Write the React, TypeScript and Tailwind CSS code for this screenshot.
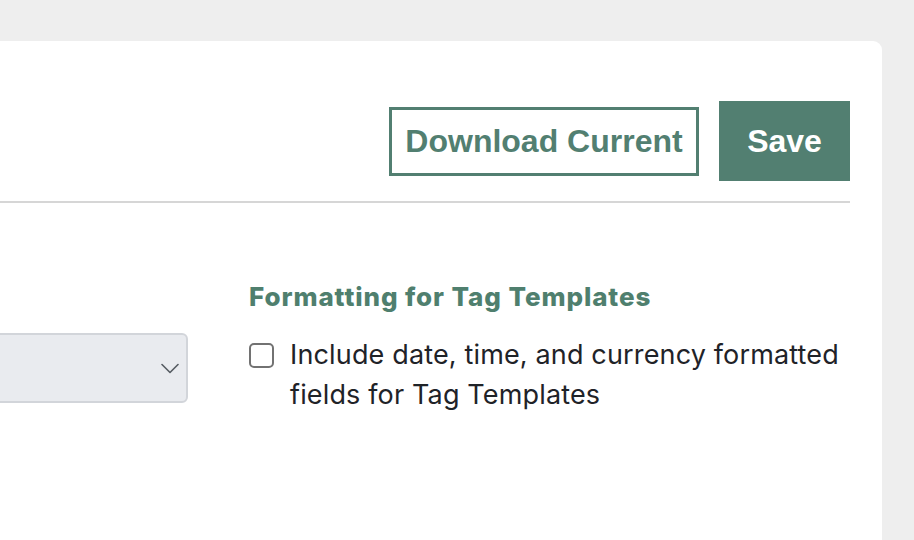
import React from "react";

export default function App() {
  return (
    <div className="min-h-[540px] w-full overflow-hidden bg-[#eeeeee] pt-[41px] pr-[32px]">
      <div className="h-[520px] w-full rounded-tr-[9px] bg-white pt-[60px] pr-[32px]">
        <div className="flex items-center justify-end gap-[20px]">
          <button
            className="h-[69px] w-[310px] border-[3px] border-[#527f71] bg-white text-[32px] font-bold leading-none text-[#527f71]"
            style={{ fontFamily: '"Liberation Sans", Arial, sans-serif' }}
          >
            Download Current
          </button>
          <button
            className="h-[80px] w-[131px] bg-[#527f71] text-[32px] font-bold leading-none text-white"
            style={{ fontFamily: '"Liberation Sans", Arial, sans-serif' }}
          >
            Save
          </button>
        </div>
        <div className="mt-[20px] h-[2px] w-full bg-[#d6d6d6]" />
        <div
          className="flex items-start gap-[61px]"
          style={{ fontFamily: 'Inter, "Noto Sans", sans-serif' }}
        >
          <div className="w-[188px] shrink-0 pt-[130px]">
            <div className="-ml-[12px] flex h-[70px] w-[200px] items-center justify-end rounded-[6px] border-2 border-[#d2d5da] bg-[#e9ebef] pr-[7px]">
              <svg width="18" height="11" viewBox="0 0 18 11" fill="none">
                <path d="M1 1.5 L9 9.5 L17 1.5" stroke="#555b62" strokeWidth="1.6" strokeLinecap="round" strokeLinejoin="round" />
              </svg>
            </div>
          </div>
          <div className="flex-1 pt-[78px]">
            <h2 className="text-[26px] font-extrabold leading-[32px] tracking-[0.9px] text-[#4f7f6e]">
              Formatting for Tag Templates
            </h2>
            <label className="mt-[22px] flex items-start gap-[16px]">
              <span className="mt-[8px] block h-[25px] w-[25px] shrink-0 rounded-[5px] border-2 border-[#727272] bg-white" />
              <span className="text-[27px] leading-[40px] tracking-[0.15px] text-[#1f2328]">
                Include date, time, and currency formatted fields for Tag Templates
              </span>
            </label>
          </div>
        </div>
      </div>
    </div>
  );
}
